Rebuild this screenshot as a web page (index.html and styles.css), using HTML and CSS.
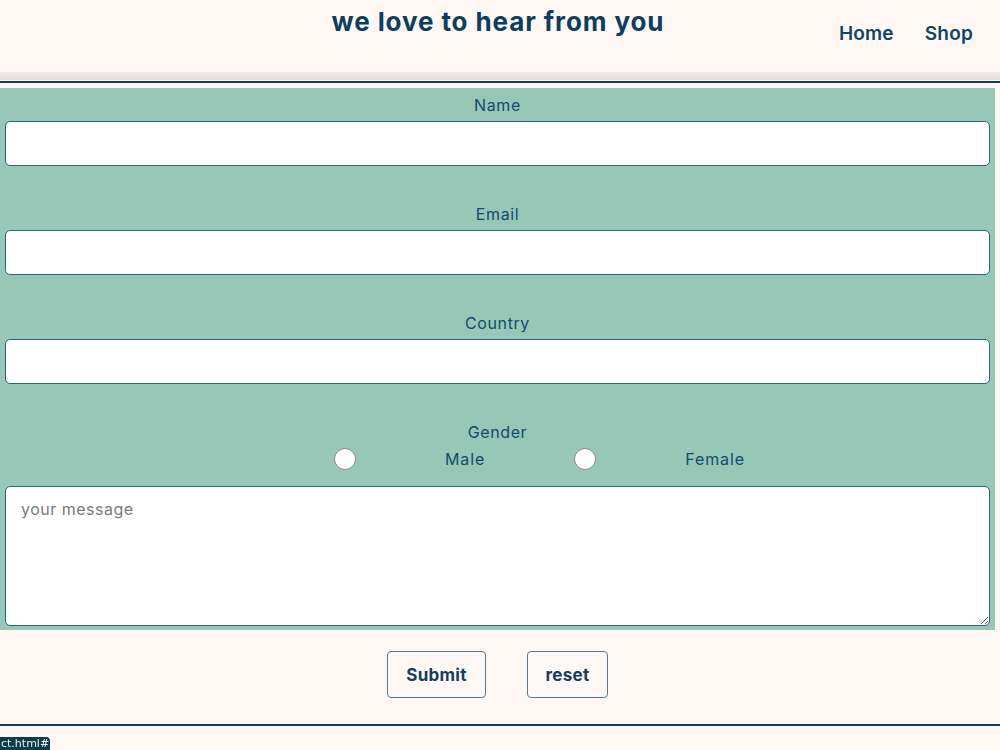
FILE: index.html
```html
<!DOCTYPE html>
<html lang="en">
<head>
<meta charset="utf-8">
<title>Contact</title>
<link rel="stylesheet" href="styles.css">
</head>
<body>
<header class="top">
  <div class="spacer"></div>
  <h1 class="title">we love to hear from you</h1>
  <nav class="nav">
    <a href="#" class="nav-link">Home</a>
    <a href="#" class="nav-link">Shop</a>
  </nav>
</header>
<div class="shade"></div>
<div class="rule"></div>
<form class="form">
  <label class="label" for="name">Name</label>
  <input class="field" id="name" type="text">
  <label class="label" for="email">Email</label>
  <input class="field" id="email" type="email">
  <label class="label" for="country">Country</label>
  <input class="field" id="country" type="text">
  <div class="label gender-label">Gender</div>
  <div class="radios">
    <input class="radio" type="radio" name="g" id="male">
    <label class="radio-text" for="male">Male</label>
    <input class="radio" type="radio" name="g" id="female">
    <label class="radio-text" for="female">Female</label>
  </div>
  <textarea class="message" placeholder="your message"></textarea>
</form>
<div class="actions">
  <button class="btn btn-submit" type="button">Submit</button>
  <button class="btn btn-reset" type="button">reset</button>
</div>
<div class="rule rule-bottom"></div>
<div class="status">ct.html#</div>
</body>
</html>
```

FILE: styles.css
```css
* { box-sizing: border-box; }
html, body { margin: 0; padding: 0; }
body {
  background: #fff7f4;
  font-family: Inter, "Noto Sans", sans-serif;
  color: #0c3e5e;
  height: 750px;
  overflow: hidden;
}
.top {
  height: 72px;
  display: grid;
  grid-template-columns: 1fr auto 1fr;
  align-items: start;
}
.title {
  margin: 0;
  padding-top: 5px;
  padding-right: 4px;
  font-size: 26px;
  font-weight: 700;
  line-height: 34px;
  color: #0c3e5e;
  letter-spacing: 0.9px;
}
.nav {
  justify-self: end;
  display: flex;
  gap: 31px;
  padding-top: 21px;
  padding-right: 27px;
}
.nav-link {
  color: #0f4564;
  text-decoration: none;
  font-size: 19px;
  font-weight: 600;
  line-height: 26px;
  letter-spacing: 0.2px;
}
.shade {
  height: 8px;
  background: linear-gradient(#f1e9e7, #e7dedc);
}
.rule {
  margin-top: 1px;
  height: 2px;
  background: #0d3c5c;
}
.form {
  margin-top: 5px;
  margin-right: 5px;
  background: #97c8b7;
  padding: 5px 5px 4px;
  display: flex;
  flex-direction: column;
}
.label {
  display: block;
  text-align: center;
  font-size: 16px;
  line-height: 24px;
  color: #134b6b;
  margin-bottom: 4px;
  letter-spacing: 0.6px;
}
.field {
  display: block;
  width: 100%;
  height: 45px;
  border: 1px solid #2b6579;
  border-radius: 5px;
  background: #fff;
  margin: 0 0 36px;
  font: inherit;
}
.gender-label { margin-bottom: 3px; }
.radios {
  display: flex;
  align-items: center;
  gap: 89px;
  padding-left: 329px;
  height: 24px;
  margin-bottom: 15px;
}
.radio {
  appearance: none;
  width: 22px;
  height: 22px;
  margin: 0;
  border-radius: 50%;
  border: 1px solid #8a8a8a;
  background: #fff;
}
.radio-text {
  font-size: 16px;
  line-height: 24px;
  color: #134b6b;
  letter-spacing: 0.9px;
}
.message {
  display: block;
  width: 100%;
  height: 140px;
  border: 1px solid #2b6579;
  border-radius: 5px;
  background: #fff;
  padding: 12px 15px;
  font-family: inherit;
  font-size: 16px;
  letter-spacing: 0.5px;
  color: #333;
}
.message::placeholder { color: #7a7a7a; }
.actions {
  display: flex;
  justify-content: center;
  gap: 41px;
  padding-top: 21px;
  padding-right: 5px;
  height: 94px;
}
.btn {
  height: 47px;
  border: 1px solid #557d92;
  border-radius: 4px;
  background: #fff7f4;
  color: #143f5c;
  font-family: inherit;
  font-size: 17px;
  font-weight: 700;
  letter-spacing: 0.3px;
}
.btn-submit { width: 99px; }
.btn-reset { width: 81px; }
.rule-bottom { margin-top: 0; }
.status {
  position: fixed;
  left: 0;
  bottom: 0;
  width: 50px;
  height: 13px;
  background: #0d3d4a;
  color: #e8f0f0;
  font-family: "DejaVu Sans", sans-serif;
  font-size: 11px;
  line-height: 13px;
  padding: 0 0 0 1px;
  border-radius: 0 4px 0 0;
  white-space: nowrap;
}
```
